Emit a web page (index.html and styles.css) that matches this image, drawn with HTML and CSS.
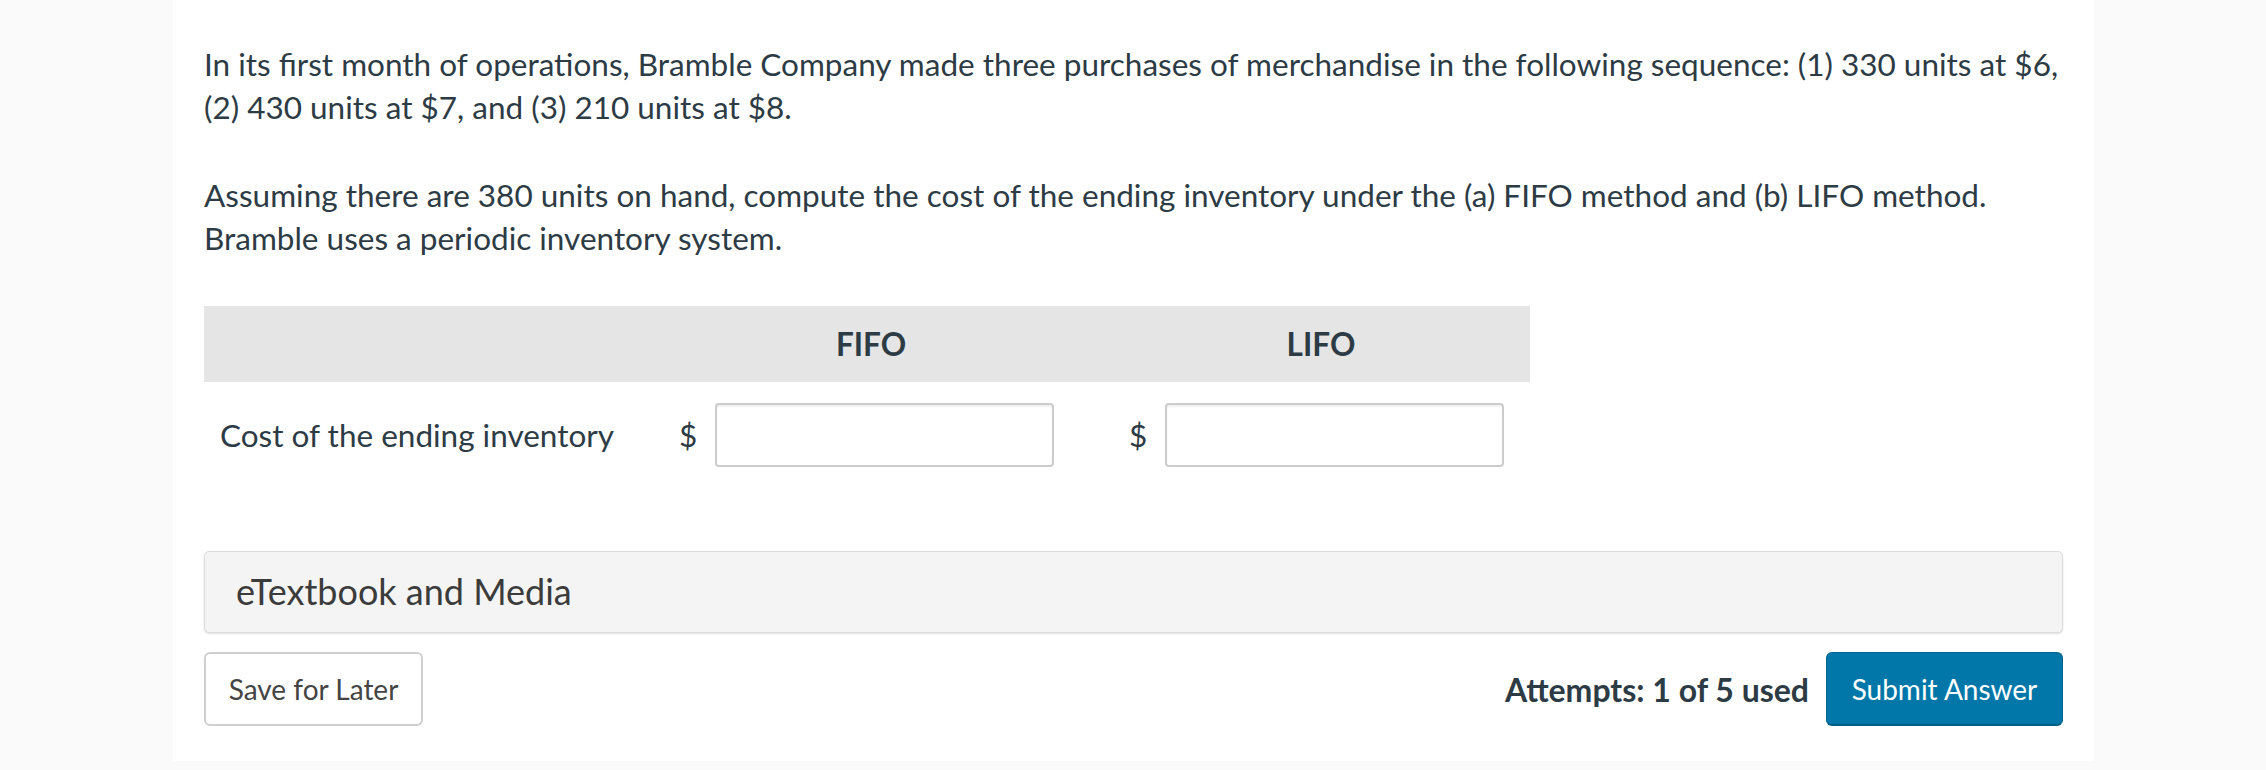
FILE: index.html
```html
<!DOCTYPE html>
<html lang="en">
<head>
<meta charset="utf-8">
<title>Question</title>
<link rel="stylesheet" href="styles.css">
</head>
<body>
<main class="panel">
  <p class="para">In its first month of operations, Bramble Company made three purchases of merchandise in the following sequence: (1) 330 units at $6, (2) 430 units at $7, and (3) 210 units at $8.</p>
  <p class="para">Assuming there are 380 units on hand, compute the cost of the ending inventory under the (a) FIFO method and (b) LIFO method. Bramble uses a periodic inventory system.</p>

  <div class="table">
    <div class="thead">
      <div class="th th-empty"></div>
      <div class="th">FIFO</div>
      <div class="th">LIFO</div>
    </div>
    <div class="trow">
      <div class="td td-label">Cost of the ending inventory</div>
      <div class="td td-input"><span class="cur">$</span><input class="field" type="text" aria-label="FIFO"></div>
      <div class="td td-input"><span class="cur">$</span><input class="field" type="text" aria-label="LIFO"></div>
    </div>
  </div>

  <div class="media">eTextbook and Media</div>

  <div class="footer">
    <button class="btn btn-save" type="button">Save for Later</button>
    <div class="right">
      <span class="attempts">Attempts: 1 of 5 used</span>
      <button class="btn btn-submit" type="button">Submit Answer</button>
    </div>
  </div>
</main>
</body>
</html>
```
FILE: styles.css
```css
html, body {
  margin: 0;
  padding: 0;
}
body {
  background: #fafafa;
  font-family: Lato, "Open Sans", "Liberation Sans", sans-serif;
  color: #2d3b45;
}
.panel {
  margin-left: 173px;
  width: 1921px;
  box-sizing: border-box;
  background: #ffffff;
  padding: 43px 31px 35px 31px;
}
.para {
  margin: 0 -12px 45px 0;
  font-size: 31.5px;
  line-height: 43px;
}
.table {
  margin-top: 46px;
  width: 1326px;
}
.thead {
  display: grid;
  grid-template-columns: 426px 450px 450px;
  background: #e5e5e5;
  height: 76px;
  align-items: center;
}
.th {
  font-size: 31.5px;
  line-height: 43px;
  font-weight: 700;
  text-align: center;
  padding-left: 32px;
}
.trow {
  display: grid;
  grid-template-columns: 426px 450px 450px;
  align-items: center;
  padding-top: 21px;
}
.td {
  font-size: 31.5px;
  line-height: 43px;
}
.td-label {
  padding-left: 16px;
  white-space: nowrap;
}
.td-input {
  display: flex;
  align-items: center;
  padding-left: 49px;
}
.cur {
  width: 36px;
}
.field {
  box-sizing: border-box;
  width: 339px;
  height: 64px;
  border: 2px solid #cccccc;
  border-radius: 4px;
  box-shadow: inset 0 2px 2px rgba(0, 0, 0, 0.06);
  background: #ffffff;
  font-family: inherit;
  font-size: 28px;
  padding: 0 10px;
  margin: 0;
}
.media {
  margin-top: 84px;
  box-sizing: border-box;
  height: 82px;
  background: #f4f4f4;
  border: 1px solid #dcdcdc;
  border-radius: 5px;
  box-shadow: 0 1px 2px rgba(0, 0, 0, 0.12);
  padding: 18px 30px 0 31px;
  font-size: 36px;
  line-height: 43px;
  color: #3b3b3b;
}
.footer {
  margin-top: 19px;
  display: flex;
  justify-content: space-between;
  align-items: center;
}
.right {
  display: flex;
  align-items: center;
  gap: 17px;
}
.attempts {
  font-size: 32px;
  font-weight: 700;
  line-height: 43px;
  color: #2d3b45;
}
.btn {
  font-family: inherit;
  font-size: 28px;
  line-height: 36px;
  height: 74px;
  box-sizing: border-box;
  border-radius: 6px;
  margin: 0;
  padding: 0;
  cursor: pointer;
}
.btn-save {
  width: 219px;
  background: #ffffff;
  color: #444444;
  border: 2px solid #cfcfcf;
}
.btn-submit {
  width: 237px;
  background: #0077a8;
  color: #ffffff;
  border: 1px solid #006690;
  border-bottom: 2px solid #005f87;
}
```
